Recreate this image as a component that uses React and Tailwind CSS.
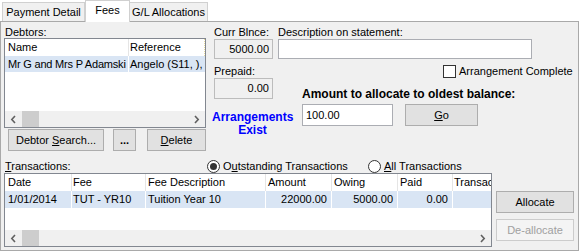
import React from "react";

function ChevL() {
  return (
    <svg width="7" height="9" viewBox="0 0 7 9">
      <path d="M5 1 L1.8 4.5 L5 8" stroke="#606060" strokeWidth="1.6" fill="none" />
    </svg>
  );
}
function ChevR() {
  return (
    <svg width="7" height="9" viewBox="0 0 7 9">
      <path d="M2 1 L5.2 4.5 L2 8" stroke="#606060" strokeWidth="1.6" fill="none" />
    </svg>
  );
}

function HScroll() {
  return (
    <div className="flex h-[16px] bg-[#f0f0f0] items-stretch shrink-0">
      <div className="w-[17px] flex items-center justify-center">
        <ChevL />
      </div>
      <div className="w-[17px] bg-[#cdcdcd]" />
      <div className="flex-1" />
      <div className="w-[17px] flex items-center justify-center">
        <ChevR />
      </div>
    </div>
  );
}

function Btn({ children, className = "" }) {
  return (
    <div
      className={
        "flex items-center justify-center border border-[#adadad] bg-[#e1e1e1] whitespace-nowrap " +
        className
      }
    >
      {children}
    </div>
  );
}

export default function App() {
  return (
    <div className="w-[580px] h-[251px] bg-white overflow-hidden font-['Liberation_Sans',Arial,sans-serif] text-[11px] text-black leading-none">
      {/* Tabs */}
      <div className="flex h-[21px] items-end pl-[2px] relative z-10">
        <div className="w-[83px] h-[19px] border border-b-0 border-[#d0d0d0] bg-[#f0f0f0] flex items-center justify-center">
          Payment Detail
        </div>
        <div className="w-[45px] h-[22px] -mb-px border border-b-0 border-[#d0d0d0] bg-white flex items-center justify-center pb-[3px]">
          Fees
        </div>
        <div className="w-[78px] h-[19px] border border-b-0 border-l-0 border-[#d0d0d0] bg-[#f0f0f0] flex items-center justify-center">
          G/L Allocations
        </div>
      </div>

      {/* Panel */}
      <div className="w-[579px] h-[230px] border border-[#a9a9a9] bg-[#f0f0f0] flex flex-col">
        {/* Top section */}
        <div className="flex pt-[4px] pl-[3px]">
          {/* Left column */}
          <div className="w-[202px] flex flex-col">
            <div className="h-[12px] leading-[12px] pl-[1px]">Debtors:</div>
            <div className="h-[90px] border border-[#828790] bg-white flex flex-col">
              <div className="flex h-[17px] shrink-0">
                <div className="w-[124px] border-r border-[#e5e5e5] pl-[3px] leading-[17px]">Name</div>
                <div className="flex-1 pl-[1px] leading-[17px] border-r border-dotted border-[#e8dca0]">Reference</div>
              </div>
              <div className="flex h-[16px] bg-[#d9e5f4] shrink-0">
                <div className="w-[124px] border-r border-white pl-[3px] leading-[16px] whitespace-nowrap overflow-hidden tracking-[-0.2px]">
                  Mr G and Mrs P Adamski
                </div>
                <div className="flex-1 min-w-0 pl-[1px] leading-[16px] whitespace-nowrap overflow-hidden">
                  Angelo (S11, ), Year 10
                </div>
              </div>
              <div className="flex-1" />
              <HScroll />
            </div>
            <div className="flex mt-[1px] ml-[4px] h-[22px]">
              <Btn className="w-[96px]">
                Debtor&nbsp;<span className="underline">S</span>earch...
              </Btn>
              <Btn className="w-[23px] ml-[9px] font-bold">...</Btn>
              <Btn className="w-[59px] ml-[11px]">
                <span className="underline">D</span>elete
              </Btn>
            </div>
          </div>

          {/* Middle column */}
          <div className="w-[59px] ml-[8px] flex flex-col">
            <div className="h-[13px] leading-[13px] whitespace-nowrap">Curr Blnce:</div>
            <div className="h-[20px] border border-[#bcbcbc] bg-[#f0f0f0] flex items-center justify-end pr-[3px]">
              5000.00
            </div>
            <div className="h-[14px] leading-[14px] mt-[5px]">Prepaid:</div>
            <div className="h-[21px] border border-[#bcbcbc] bg-[#f0f0f0] flex items-center justify-end pr-[3px]">
              0.00
            </div>
            <div className="w-[81px] -ml-[2px] mt-[12px] text-center font-bold text-[12px] leading-[13px] text-[#0000ff]">
              Arrangements
              <br />
              Exist
            </div>
          </div>

          {/* Right column */}
          <div className="ml-[5px] flex flex-col">
            <div className="h-[13px] leading-[13px]">Description on statement:</div>
            <div className="w-[254px] h-[20px] border border-[#abadb3] bg-white" />
            <div className="flex items-center mt-[6px] ml-[165px] h-[13px]">
              <span className="w-[13px] h-[13px] border border-[#333333] bg-white shrink-0" />
              <span className="ml-[3px] whitespace-nowrap">Arrangement Complete</span>
            </div>
            <div className="mt-[9px] ml-[24px] h-[14px] leading-[14px] font-bold text-[12px] whitespace-nowrap">
              Amount to allocate to oldest balance:
            </div>
            <div className="flex mt-[3px] ml-[24px]">
              <div className="w-[91px] h-[22px] border border-[#abadb3] bg-white flex items-center pl-[3px]">
                100.00
              </div>
              <Btn className="w-[73px] h-[22px] ml-[12px] border-[#0078d7]">
                <span className="underline">G</span>o
              </Btn>
            </div>
          </div>
        </div>

        {/* Bottom section */}
        <div className="flex mt-[8px] pl-[3px]">
          <div className="w-[488px] flex flex-col">
            <div className="flex h-[14px] items-center">
              <div className="w-[203px] pl-[1px] leading-[14px]">
                <span className="underline">T</span>ransactions:
              </div>
              <div className="w-[161px] flex items-center">
                <span className="w-[13px] h-[13px] rounded-full border border-[#333333] bg-white flex items-center justify-center shrink-0">
                  <span className="w-[7px] h-[7px] rounded-full bg-[#333333]" />
                </span>
                <span className="ml-[3px] whitespace-nowrap">
                  O<span className="underline">u</span>tstanding Transactions
                </span>
              </div>
              <div className="flex items-center">
                <span className="w-[13px] h-[13px] rounded-full border border-[#333333] bg-white shrink-0" />
                <span className="ml-[3px] whitespace-nowrap">
                  <span className="underline">A</span>ll Transactions
                </span>
              </div>
            </div>
            <div className="h-[74px] border border-[#828790] bg-white flex flex-col">
              <div className="flex h-[17px] shrink-0 leading-[17px] whitespace-nowrap">
                <div className="w-[67px] border-r border-[#e5e5e5] pl-[3px]">Date</div>
                <div className="w-[74px] border-r border-[#e5e5e5] pl-[1px]">Fee</div>
                <div className="w-[120px] border-r border-[#e5e5e5] pl-[2px]">Fee Description</div>
                <div className="w-[66px] border-r border-[#e5e5e5] pl-[2px]">Amount</div>
                <div className="w-[66px] border-r border-[#e5e5e5] pl-[2px]">Owing</div>
                <div className="w-[55px] border-r border-[#e5e5e5] pl-[2px]">Paid</div>
                <div className="flex-1 min-w-0 overflow-hidden pl-[1px]">Transaction</div>
              </div>
              <div className="flex h-[17px] shrink-0 leading-[17px] whitespace-nowrap bg-[#d9e5f4]">
                <div className="w-[67px] border-r border-white pl-[3px]">1/01/2014</div>
                <div className="w-[74px] border-r border-white pl-[1px]">TUT - YR10</div>
                <div className="w-[120px] border-r border-white pl-[2px]">Tuition Year 10</div>
                <div className="w-[66px] border-r border-white pr-[4px] text-right">22000.00</div>
                <div className="w-[66px] border-r border-white pr-[4px] text-right">5000.00</div>
                <div className="w-[55px] border-r border-white pr-[4px] text-right">0.00</div>
                <div className="flex-1" />
              </div>
              <div className="flex-1" />
              <HScroll />
            </div>
          </div>
          <div className="ml-[4px] w-[78px] pt-[32px] flex flex-col">
            <Btn className="h-[22px]">Allocate</Btn>
            <div className="h-[22px] mt-[6px] border border-[#cccccc] bg-[#f4f4f4] text-[#a0a0a0] flex items-center justify-center">
              De-allocate
            </div>
          </div>
        </div>
      </div>
    </div>
  );
}
